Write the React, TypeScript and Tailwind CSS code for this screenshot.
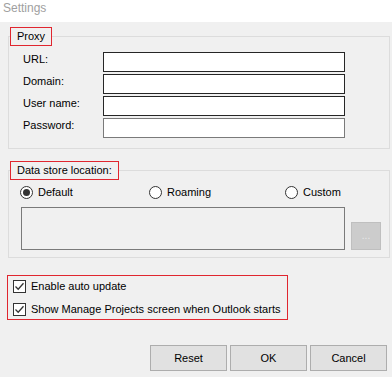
import type { ReactNode } from 'react'

const proxyFields = [
  { label: 'URL:', dark: true },
  { label: 'Domain:', dark: true },
  { label: 'User name:', dark: true },
  { label: 'Password:', dark: false },
]

function Radio({ checked, children }: { checked?: boolean; children: ReactNode }) {
  return (
    <div className="flex items-center gap-[5px]">
      <span className="w-[13px] h-[13px] rounded-full border border-[#333333] bg-white flex items-center justify-center">
        {checked && <span className="w-[7px] h-[7px] rounded-full bg-[#333333]" />}
      </span>
      <span>{children}</span>
    </div>
  )
}

function Check({ children }: { children: ReactNode }) {
  return (
    <div className="h-[13px] flex items-center gap-[5px]">
      <span className="w-[13px] h-[13px] border border-[#333333] bg-white flex items-center justify-center">
        <svg width="11" height="11" viewBox="0 0 11 11" fill="none">
          <path d="M1.5 5.5 L4.2 8.2 L9.5 2.2" stroke="#333333" strokeWidth="1.3" />
        </svg>
      </span>
      <span>{children}</span>
    </div>
  )
}

export default function App() {
  return (
    <div className="w-[392px] h-[377px] overflow-hidden bg-[#f0f0f0] text-black text-[11px] leading-[13px] font-['Liberation_Sans',Arial,sans-serif]">
      <div className="h-[22px] bg-white pl-[3px] pt-[2px] text-[12px] text-[#a0a0a0]">Settings</div>

      <div className="pl-[8px] pr-[2px] pt-[5px]">
        <fieldset className="border border-[#dcdcdc]">
          <legend className="ml-[1px] border border-[#e0262f] px-[6px] py-[2px]">Proxy</legend>
          <div className="flex flex-col gap-[2px] pl-[14px] pt-[6px] pb-[10px]">
            {proxyFields.map((f) => (
              <div key={f.label} className="flex items-start">
                <span className="w-[80px] mt-[1px]">{f.label}</span>
                <div
                  className={
                    f.dark
                      ? 'w-[242px] h-[20px] bg-white border border-[#262626]'
                      : 'w-[242px] h-[20px] bg-white border border-[#7a7a7a]'
                  }
                />
              </div>
            ))}
          </div>
        </fieldset>

        <fieldset className="mt-[12px] border border-[#dcdcdc]">
          <legend className="ml-[1px] border border-[#e0262f] px-[6px] py-[2px]">Data store location:</legend>
          <div className="pt-[5px] pb-[7px]">
            <div className="h-[15px] flex items-center pl-[11px]">
              <div className="w-[129px]">
                <Radio checked>Default</Radio>
              </div>
              <div className="w-[136px]">
                <Radio>Roaming</Radio>
              </div>
              <Radio>Custom</Radio>
            </div>
            <div className="mt-[7px] flex items-end gap-[6px] pl-[12px]">
              <div className="w-[324px] h-[43px] border border-[#7a7a7a] bg-[#f0f0f0]" />
              <button className="w-[30px] h-[28px] bg-[#cccccc] border border-[#bfbfbf] text-[#e8e8e8] text-[10px] leading-[10px]">
                ...
              </button>
            </div>
          </div>
        </fieldset>
      </div>

      <div className="ml-[7px] mt-[17px] w-[281px] border border-[#e0262f] pl-[5px] pt-[4px] pb-[3px] flex flex-col gap-[10px]">
        <Check>Enable auto update</Check>
        <Check>Show Manage Projects screen when Outlook starts</Check>
      </div>

      <div className="mt-[25px] pr-[5px] flex justify-end gap-[3px]">
        {['Reset', 'OK', 'Cancel'].map((b) => (
          <button key={b} className="w-[77px] h-[26px] bg-[#e1e1e1] border border-[#adadad]">
            {b}
          </button>
        ))}
      </div>
    </div>
  )
}
